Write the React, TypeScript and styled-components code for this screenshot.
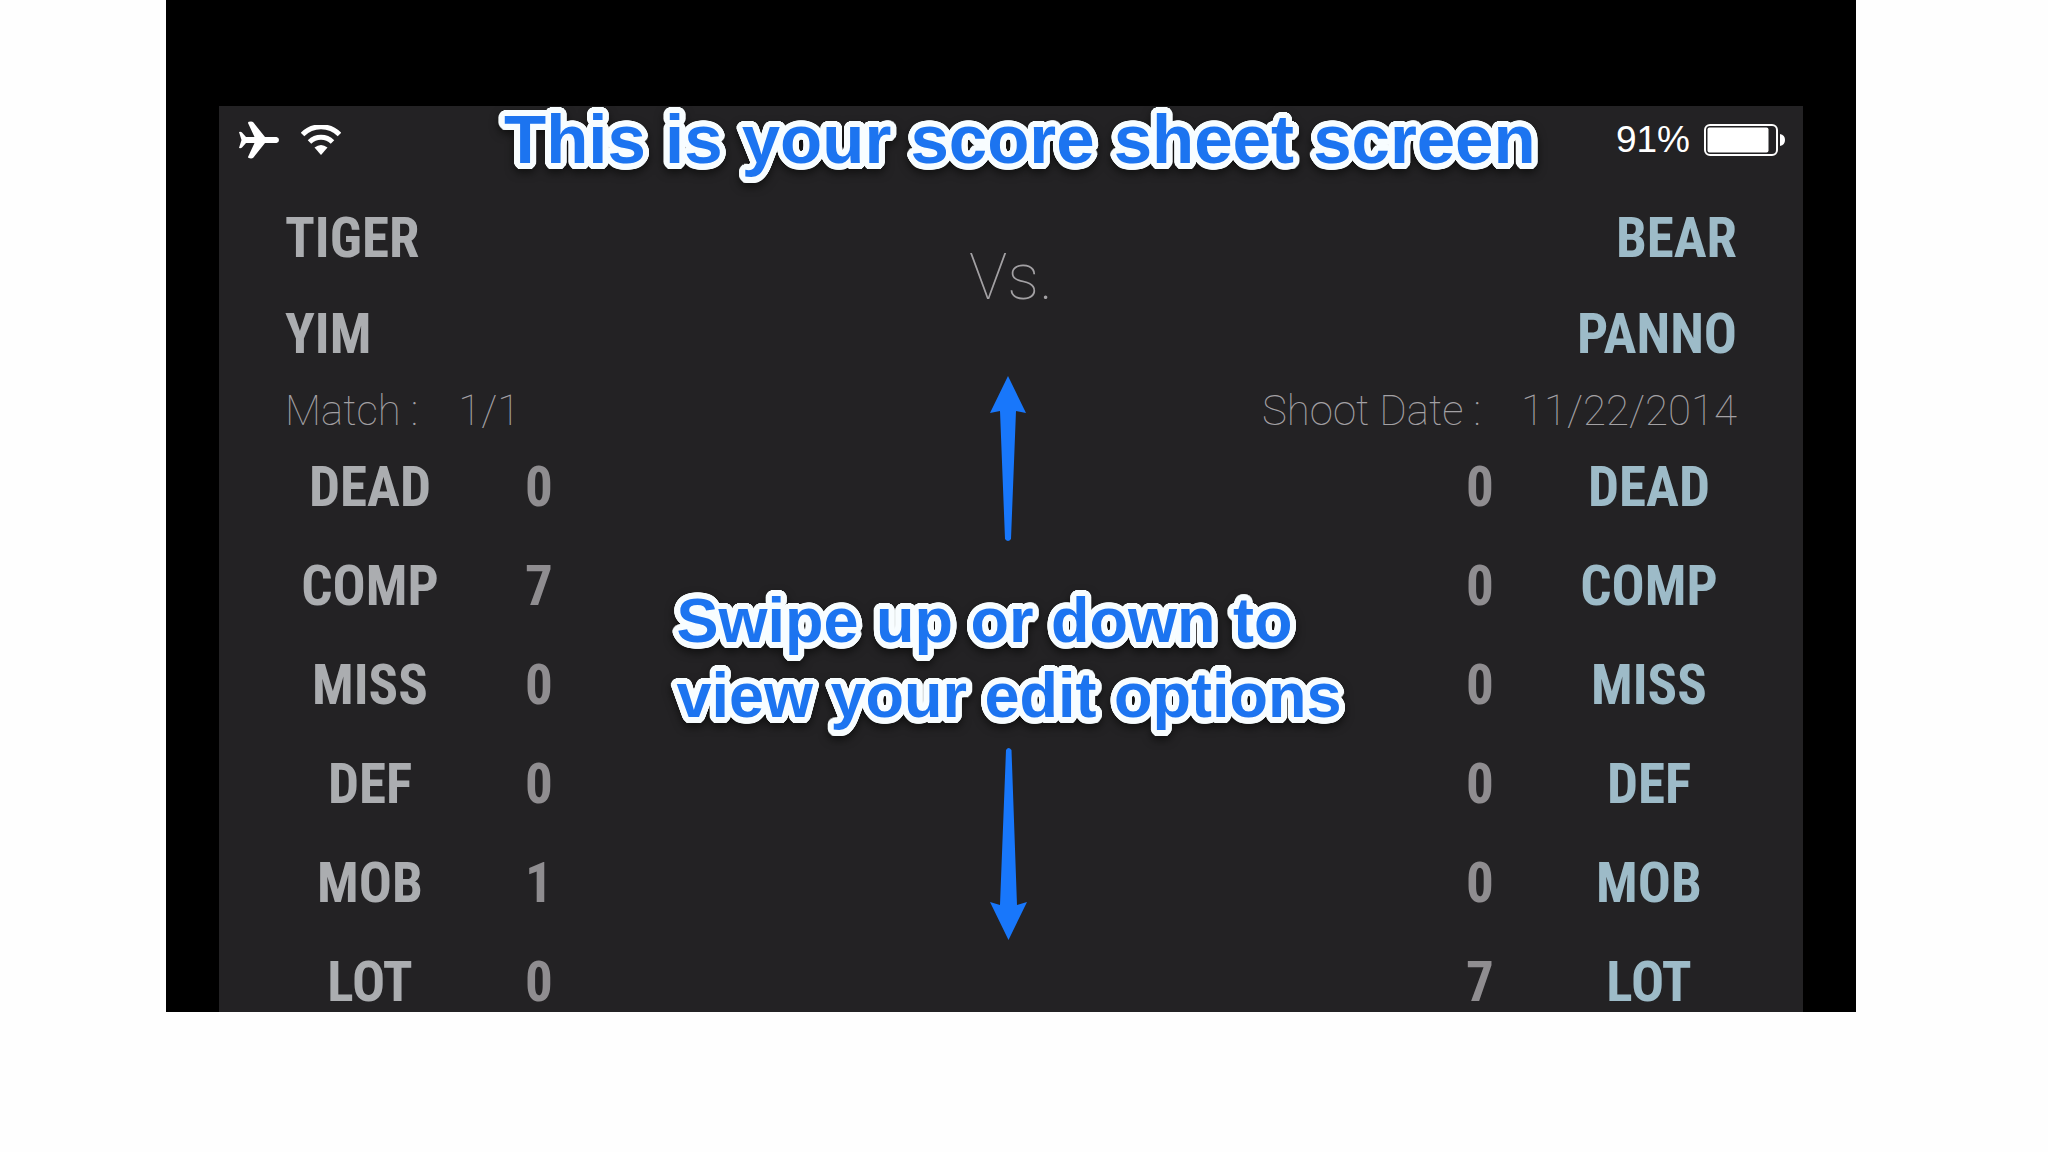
import React from "react";
import styled, { createGlobalStyle } from "styled-components";

const condensed = `"Roboto Condensed", "Liberation Sans Narrow", Roboto, sans-serif`;
const thin = `Roboto, "Liberation Sans", sans-serif`;
const regular = `"Liberation Sans", Arial, sans-serif`;

const GlobalStyle = createGlobalStyle`
  * { box-sizing: border-box; }
  body { margin: 0; background: #fefefe; }
`;

const Device = styled.main`
  margin: 0 192px 0 166px;
  padding: 106px 53px 0;
  background: #000;
`;

const Screen = styled.section`
  position: relative;
  background: #232224;
`;

const StatusBar = styled.header`
  display: grid;
  grid-template-columns: 265px 1fr auto;
  align-items: center;
  height: 68px;
  padding: 0 18px 0 20px;
`;

const StatusGroup = styled.div`
  display: flex;
  align-items: center;
  gap: 14px;
  color: #fff;
  font: 400 37px/40px ${regular};
`;

const Signals = styled(StatusGroup)`
  gap: 22px;
`;

// A ring of hard shadows gives the lettering a round-cornered white border.
const ring = (radius: number, steps: number) =>
  Array.from({ length: steps }, (_, i) => {
    const angle = (i / steps) * Math.PI * 2;
    const x = (Math.cos(angle) * radius).toFixed(1);
    const y = (Math.sin(angle) * radius).toFixed(1);
    return `${x}px ${y}px 0 #f8fdff`;
  }).join(", ");

const outlined = `
  margin: 0;
  color: #1c74f0;
  font-family: ${regular};
  font-weight: 700;
  white-space: nowrap;
  text-shadow: ${ring(3, 12)}, ${ring(6, 32)};
  filter: drop-shadow(0 4px 4px #111);
`;

const Title = styled.h1`
  ${outlined}
  font-size: 69px;
  line-height: 66px;
`;

const Teams = styled.div`
  display: grid;
  grid-template-columns: 1fr auto 1fr;
  align-items: center;
  padding: 16px 66px 0;
`;

const Side = styled.div<{ $away?: boolean }>`
  color: ${(p) => (p.$away ? "#9dbbc8" : "#abadb0")};
  text-align: ${(p) => (p.$away ? "right" : "left")};
  font: 700 55px/96px ${condensed};
`;

const Versus = styled.div`
  padding-bottom: 16px;
  color: #a3a1a4;
  font: 100 64px/96px ${thin};
`;

const Details = styled.div`
  display: flex;
  justify-content: space-between;
  padding: 5px 66px 2px;
  color: #a3a1a4;
  font: 100 42px/48px ${thin};
`;

const Detail = styled.div`
  display: flex;
  gap: 40px;
`;

const Scores = styled.table`
  width: 100%;
  table-layout: fixed;
  border-collapse: collapse;
  font: 700 55px/60px ${condensed};
`;

const Row = styled.tr`
  height: 99px;

  &:first-child {
    height: 80px;
  }
`;

const LabelCol = styled.col`
  width: 168px;
`;

const EdgeCol = styled.col<{ $away?: boolean }>`
  width: ${(p) => (p.$away ? 70 : 67)}px;
`;

const ValueCol = styled.col`
  width: 170px;
`;

const Label = styled.th<{ $away?: boolean }>`
  padding: 0;
  vertical-align: bottom;
  color: ${(p) => (p.$away ? "#9dbbc8" : "#abadb0")};
`;

const Value = styled.td`
  padding: 0;
  vertical-align: bottom;
  text-align: center;
  color: #8f8d90;
`;

const Hint = styled.aside`
  position: absolute;
  top: 270px;
  left: 0;
  right: 4px;
  display: flex;
  flex-direction: column;
  align-items: center;
`;

const Caption = styled.p`
  ${outlined}
  padding: 42px 0 15px;
  font-size: 63px;
  line-height: 75px;
`;

const Plane = () => (
  <svg width="40" height="38" viewBox="0 0 40 38" fill="currentColor" aria-label="Airplane mode">
    <path d="M37.500 16H26L14.500 1.500Q13.500 .5 12 .5Q8.500 .5 9 2L15.500 16H7L3 11.500Q2 10.500 0 11L2.500 19L0 27Q2 27.500 3 26.500L7 22H15.500L9 36Q8.500 37.500 12 37.500Q13.500 37.500 14.500 36.500L26 22H37.500Q40 21.500 40 19T37.500 16Z" />
  </svg>
);

const Wifi = () => (
  <svg width="40" height="30" viewBox="0 0 40 30" aria-label="Wi-Fi">
    <path d="M1.500 9.500A26 26 0 0 1 38.500 9.500" fill="none" stroke="currentColor" strokeWidth="5" />
    <path d="M8.500 17A16.500 16.500 0 0 1 31.500 17" fill="none" stroke="currentColor" strokeWidth="5" />
    <path d="M20 30L13.500 22.500Q20 17.500 26.500 22.500Z" fill="currentColor" />
  </svg>
);

const Battery = () => (
  <svg width="81" height="32" viewBox="0 0 81 32" aria-label="Battery">
    <rect x="1" y="1" width="72" height="30" rx="5" fill="none" stroke="#fff" strokeWidth="2" />
    <rect x="3.500" y="3.500" width="61" height="25" rx="2" fill="#fff" />
    <path d="M76 10Q81 11 81 16T76 22Z" fill="#fff" />
  </svg>
);

const ArrowUp = () => (
  <svg width="38" height="165" viewBox="0 0 38 165" aria-label="Swipe up">
    <path d="M18 0L36 37L26 35L21 163Q18 167 15 163L10 35L0 37Z" fill="#1877fb" />
  </svg>
);

const ArrowDown = () => (
  <svg width="38" height="192" viewBox="0 0 38 192" aria-label="Swipe down">
    <path d="M18.500 192L37 154L27 157L21.500 2Q18.500 -2 16 2L10 157L0 154Z" fill="#1877fb" />
  </svg>
);

const scores = [
  { label: "DEAD", home: 0, away: 0 },
  { label: "COMP", home: 7, away: 0 },
  { label: "MISS", home: 0, away: 0 },
  { label: "DEF", home: 0, away: 0 },
  { label: "MOB", home: 1, away: 0 },
  { label: "LOT", home: 0, away: 7 },
];

export default function App() {
  return (
    <>
      <GlobalStyle />
      <Device>
        <Screen>
          <StatusBar>
            <Signals>
              <Plane />
              <Wifi />
            </Signals>
            <Title>This is your score sheet screen</Title>
            <StatusGroup>
              <span>91%</span>
              <Battery />
            </StatusGroup>
          </StatusBar>
          <Teams>
            <Side>
              <div>TIGER</div>
              <div>YIM</div>
            </Side>
            <Versus>Vs.</Versus>
            <Side $away>
              <div>BEAR</div>
              <div>PANNO</div>
            </Side>
          </Teams>
          <Details>
            <Detail>
              <span>Match :</span>
              <span>1/1</span>
            </Detail>
            <Detail>
              <span>Shoot Date :</span>
              <span>11/22/2014</span>
            </Detail>
          </Details>
          <Scores>
            <colgroup>
              <EdgeCol />
              <LabelCol />
              <ValueCol />
              <col />
              <ValueCol />
              <LabelCol />
              <EdgeCol $away />
            </colgroup>
            <tbody>
              {scores.map((s) => (
                <Row key={s.label}>
                  <td />
                  <Label scope="row">{s.label}</Label>
                  <Value>{s.home}</Value>
                  <td />
                  <Value>{s.away}</Value>
                  <Label $away>{s.label}</Label>
                  <td />
                </Row>
              ))}
            </tbody>
          </Scores>
          <Hint>
            <ArrowUp />
            <Caption>
              Swipe up or down to
              <br />
              view your edit options
            </Caption>
            <ArrowDown />
          </Hint>
        </Screen>
      </Device>
    </>
  );
}
